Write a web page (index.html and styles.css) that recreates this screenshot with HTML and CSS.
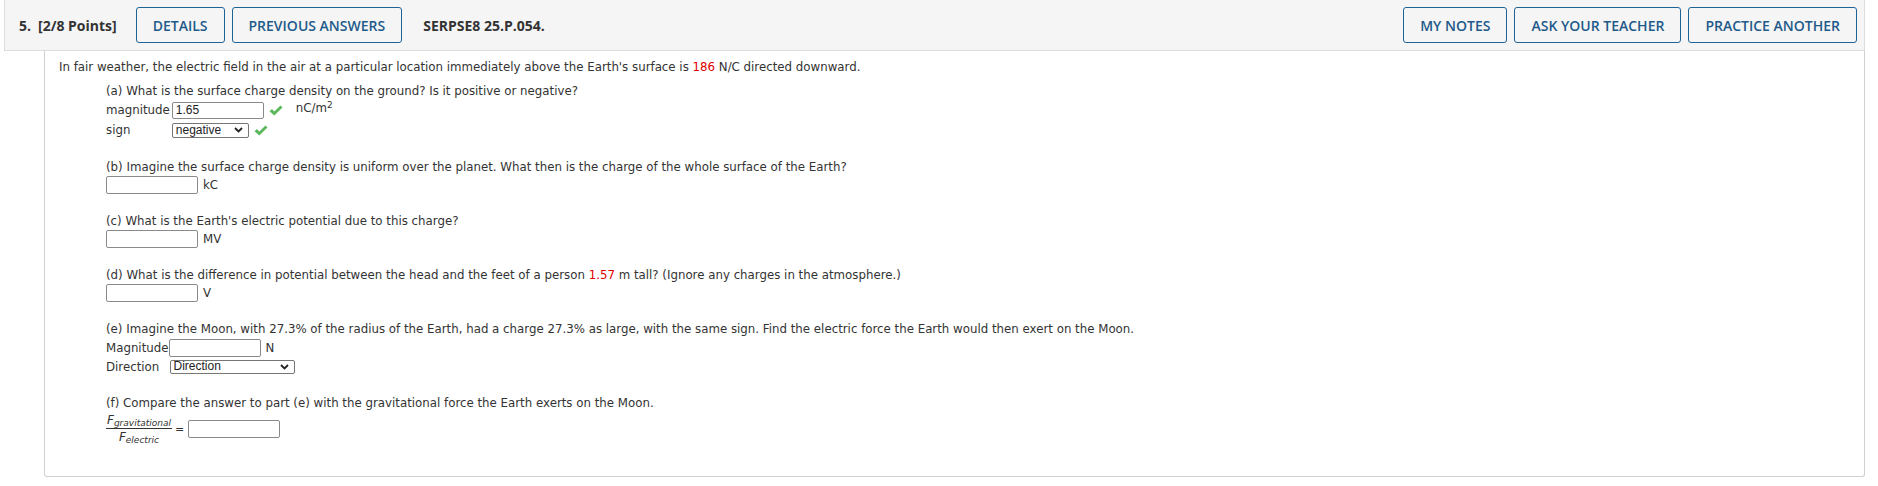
FILE: index.html
```html
<!DOCTYPE html>
<html lang="en">
<head>
<meta charset="utf-8">
<title>Question 5</title>
<link rel="stylesheet" href="styles.css">
</head>
<body>
<div class="qhead">
  <div class="qhead-left">
    <span class="qnum">5.</span>
    <span class="qpts">[2/8 Points]</span>
    <button class="hbtn">DETAILS</button>
    <button class="hbtn">PREVIOUS ANSWERS</button>
    <span class="qcode">SERPSE8 25.P.054.</span>
  </div>
  <div class="qhead-right">
    <button class="hbtn">MY NOTES</button>
    <button class="hbtn">ASK YOUR TEACHER</button>
    <button class="hbtn">PRACTICE ANOTHER</button>
  </div>
</div>
<div class="panel">
  <p class="intro">In fair weather, the electric field in the air at a particular location immediately above the Earth's surface is <span class="red">186</span> N/C directed downward.</p>
  <div class="parts">
    <div class="part">
      <div class="q">(a) What is the surface charge density on the ground? Is it positive or negative?</div>
      <div class="grid grid-a">
        <span class="lbl">magnitude</span>
        <span class="cell"><span class="inp filled">1.65</span><svg class="chk" viewBox="0 0 14 11" width="14" height="11"><path d="M0.5 6.2 L3 4 L5.3 6.6 L11.5 0.5 L13.5 2.6 L5.3 10.5 Z" fill="#5cb85c"/></svg><span class="unit u-nc">nC/m<sup>2</sup></span></span>
        <span class="lbl">sign</span>
        <span class="cell"><span class="sel sel-sign"><span class="sel-txt">negative</span><svg class="chev" viewBox="0 0 9 6" width="9" height="6"><path d="M1 1 L4.5 4.5 L8 1" fill="none" stroke="#222" stroke-width="1.8"/></svg></span><svg class="chk" viewBox="0 0 14 11" width="14" height="11"><path d="M0.5 6.2 L3 4 L5.3 6.6 L11.5 0.5 L13.5 2.6 L5.3 10.5 Z" fill="#5cb85c"/></svg></span>
      </div>
    </div>
    <div class="part">
      <div class="q">(b) Imagine the surface charge density is uniform over the planet. What then is the charge of the whole surface of the Earth?</div>
      <div class="row"><span class="inp"></span><span class="unit">kC</span></div>
    </div>
    <div class="part">
      <div class="q">(c) What is the Earth's electric potential due to this charge?</div>
      <div class="row"><span class="inp"></span><span class="unit">MV</span></div>
    </div>
    <div class="part">
      <div class="q">(d) What is the difference in potential between the head and the feet of a person <span class="red">1.57</span> m tall? (Ignore any charges in the atmosphere.)</div>
      <div class="row"><span class="inp"></span><span class="unit">V</span></div>
    </div>
    <div class="part">
      <div class="q">(e) Imagine the Moon, with 27.3% of the radius of the Earth, had a charge 27.3% as large, with the same sign. Find the electric force the Earth would then exert on the Moon.</div>
      <div class="grid grid-e">
        <span class="lbl">Magnitude</span>
        <span class="cell"><span class="inp"></span><span class="unit">N</span></span>
        <span class="lbl">Direction</span>
        <span class="cell"><span class="sel sel-dir"><span class="sel-txt">Direction</span><svg class="chev" viewBox="0 0 9 6" width="9" height="6"><path d="M1 1 L4.5 4.5 L8 1" fill="none" stroke="#222" stroke-width="1.8"/></svg></span></span>
      </div>
    </div>
    <div class="part">
      <div class="q">(f) Compare the answer to part (e) with the gravitational force the Earth exerts on the Moon.</div>
      <div class="frow">
        <span class="frac">
          <span class="num"><i>F</i><sub>gravitational</sub></span>
          <span class="den"><i>F</i><sub>electric</sub></span>
        </span>
        <span class="eq">=</span>
        <span class="inp"></span>
      </div>
    </div>
  </div>
</div>
</body>
</html>
```
FILE: styles.css
```css
html, body {
  margin: 0;
  padding: 0;
  background: #ffffff;
}
body {
  font-family: "DejaVu Sans", Verdana, sans-serif;
  font-size: 11.8px;
  color: #333333;
}
.qhead {
  margin: 0 13px 0 4px;
  height: 51px;
  box-sizing: border-box;
  background: #f5f5f5;
  border: 1px solid #dddddd;
  border-top: none;
  display: flex;
  align-items: center;
  justify-content: space-between;
  padding: 0 7px 0 14px;
  font-family: "Open Sans", "Noto Sans", sans-serif;
}
.qhead-left, .qhead-right {
  display: flex;
  align-items: center;
}
.qnum {
  font-weight: 700;
  font-size: 14px;
  color: #333;
  margin-right: 7px;
}
.qpts {
  font-weight: 700;
  font-size: 14px;
  color: #333;
  margin-right: 19px;
}
.qcode {
  font-weight: 700;
  font-size: 14px;
  color: #333;
  margin-left: 14px;
}
.hbtn {
  height: 36px;
  box-sizing: border-box;
  border: 1px solid #1f6396;
  border-radius: 3px;
  background: transparent;
  color: #1e5a8a;
  font-family: "Open Sans", "Noto Sans", sans-serif;
  font-weight: 600;
  font-size: 14px;
  padding: 0 16px;
  margin-right: 7px;
  cursor: pointer;
}
.qhead-right .hbtn:last-child {
  margin-right: 0;
}
.panel {
  margin: 0 13px 0 44px;
  height: 426px;
  box-sizing: border-box;
  border: 1px solid #d0d0d0;
  border-top: none;
  border-radius: 0 0 3px 3px;
  padding: 7px 14px 0 14px;
}
.intro {
  margin: 0;
  line-height: 18px;
}
.red {
  color: #e00000;
}
.parts {
  margin: 7px 0 0 47px;
}
.part + .part {
  margin-top: 19px;
}
.q {
  line-height: 17px;
}
.row {
  height: 18px;
  display: flex;
  align-items: center;
}
.grid {
  display: grid;
  grid-template-columns: auto auto;
  justify-content: start;
  grid-auto-rows: 19px;
  align-items: center;
}
.grid-a {
  grid-auto-rows: 20px;
}
.cell {
  display: flex;
  align-items: center;
}
.grid-a .cell {
  margin-left: 2px;
}
.inp {
  display: inline-block;
  width: 92px;
  height: 18px;
  box-sizing: border-box;
  border: 1px solid #8a8a8a;
  border-radius: 2px;
  background: #fff;
  font-family: "Liberation Sans", Arial, sans-serif;
  font-size: 12px;
  line-height: 16px;
  padding: 0 3px;
  color: #222;
}
.grid-a .inp {
  height: 17px;
  line-height: 15px;
}
.unit {
  margin-left: 5px;
}
.u-nc {
  margin-left: 13px;
  position: relative;
  top: -2px;
}
.u-nc sup {
  font-size: 9px;
  vertical-align: 4px;
  line-height: 0;
}
.chk {
  margin-left: 5px;
  display: block;
}
.sel {
  display: inline-flex;
  align-items: center;
  justify-content: space-between;
  box-sizing: border-box;
  border: 1px solid #767676;
  border-radius: 2px;
  background: #fff;
  padding: 0 5px 0 3px;
  font-family: "Liberation Sans", Arial, sans-serif;
  font-size: 12px;
  color: #222;
}
.sel-txt {
  line-height: 13px;
}
.chev {
  display: block;
}
.sel-sign {
  width: 77px;
  height: 15px;
}
.sel-dir {
  width: 125px;
  height: 14px;
  margin-left: 1px;
}
.frow {
  display: flex;
  align-items: center;
  margin-top: 1px;
}
.frac {
  display: inline-flex;
  flex-direction: column;
  align-items: center;
}
.frac i {
  font-size: 12px;
}
.frac sub {
  font-style: italic;
  font-size: 9px;
  vertical-align: -2px;
  line-height: 0;
}
.num {
  line-height: 14px;
  padding: 0 1px 1px;
  border-bottom: 1px solid #333;
}
.den {
  line-height: 16px;
}
.eq {
  margin: 0 4px 0 3px;
  font-size: 11px;
}
```
